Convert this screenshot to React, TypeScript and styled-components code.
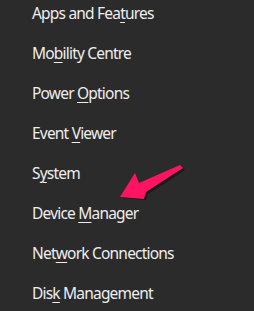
import React from "react";
import styled, { createGlobalStyle } from "styled-components";

const Global = createGlobalStyle`
  html, body { margin: 0; padding: 0; background: #2b2b2b; overflow: hidden; }
  body { width: 254px; height: 311px; }
`;

const Menu = styled.ul`
  position: relative;
  list-style: none;
  margin: -7px 0 0 0;
  padding: 0;
  width: 254px;
  height: 318px;
  background: #2b2b2b;
  overflow: hidden;
`;

const Item = styled.li`
  height: 40px;
  line-height: 40px;
  padding-left: 32px;
  font-family: "Noto Sans", "Open Sans", sans-serif;
  font-size: 15.5px;
  letter-spacing: -0.8px;
  color: #eeeeee;
  white-space: nowrap;
`;

const Key = styled.span`
  text-decoration: underline;
  text-decoration-thickness: 1px;
  text-underline-offset: 3px;
`;

const Arrow = styled.svg`
  position: absolute;
  left: 115px;
  top: 167px;
  width: 75px;
  height: 45px;
  pointer-events: none;
`;

const items: [string, string, string][] = [
  ["Apps and Fea", "t", "ures"],
  ["Mo", "b", "ility Centre"],
  ["Power ", "O", "ptions"],
  ["Event ", "V", "iewer"],
  ["S", "y", "stem"],
  ["Device ", "M", "anager"],
  ["Net", "w", "ork Connections"],
  ["Dis", "k", " Management"],
];

export default function App() {
  return (
    <>
      <Global />
      <Menu>
        {items.map(([a, k, b]) => (
          <Item key={a + k + b}>
            {a}
            <Key>{k}</Key>
            {b}
          </Item>
        ))}
        <Arrow viewBox="115 160 75 45">
          <polygon
            points="122,198 136,176 140,185 182,167 185,170 148,194 146,200"
            fill="#151515"
            opacity="0.85"
          />
          <polygon
            points="120,197 135,173 139,183 180,165 183,168 146,192 144,199"
            fill="#ff1463"
          />
        </Arrow>
      </Menu>
    </>
  );
}
